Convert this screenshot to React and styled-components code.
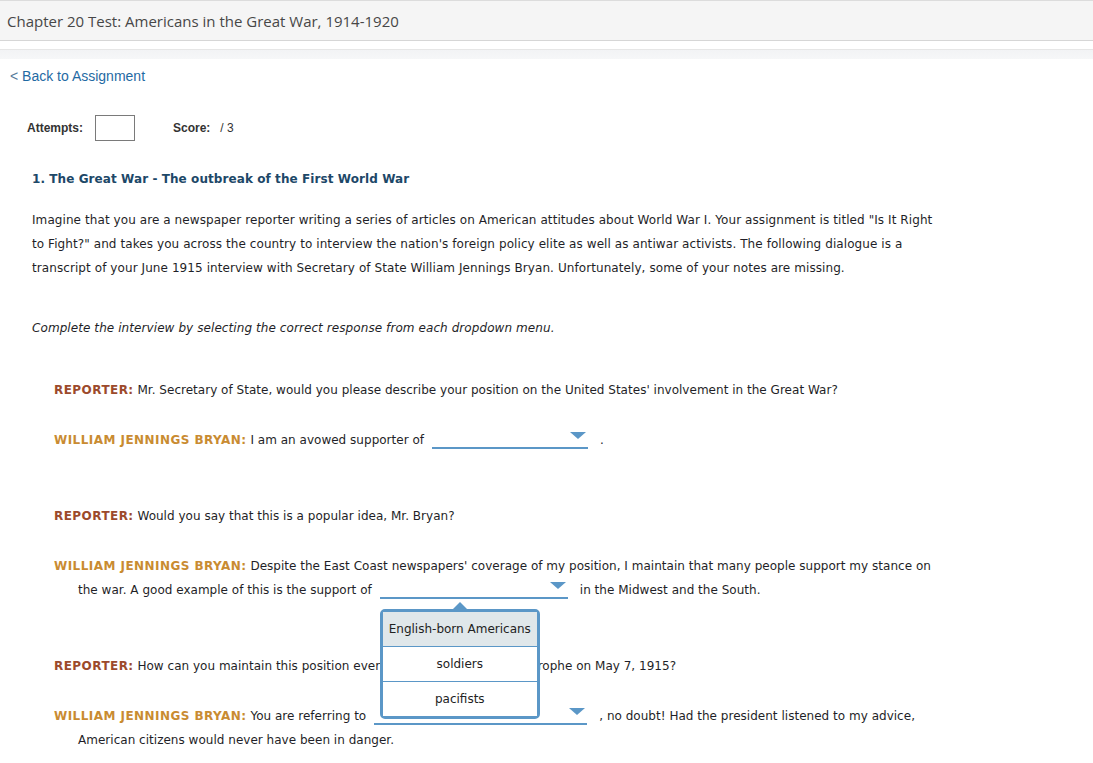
import React from 'react';
import styled, { createGlobalStyle } from 'styled-components';

const GlobalStyle = createGlobalStyle`
  body {
    margin: 0;
    background: #fff;
    font-family: "DejaVu Sans", Verdana, sans-serif;
    color: #1f1f28;
  }
`;

const TopBar = styled.div`
  height: 39px;
  border-top: 1px solid #dcdcdc;
  border-bottom: 1px solid #d6d6d6;
  background: #f5f5f5;
  display: flex;
  align-items: center;
  padding-left: 7px;
`;

const PageTitle = styled.h1`
  margin: 0;
  font-family: "Open Sans", sans-serif;
  font-weight: 400;
  font-size: 15px;
  color: #474747;
`;

const SubBand = styled.div`
  margin-top: 8px;
  height: 9px;
  border-top: 1px solid #e6e6e6;
  background: linear-gradient(#f2f3f5, #f6f7f8);
`;

const BackLink = styled.a`
  display: inline-block;
  margin: 9px 0 0 10px;
  font-family: "Liberation Sans", Arial, sans-serif;
  font-size: 14px;
  color: #1f6aa3;
  text-decoration: none;
  span {
    color: #557a9a;
  }
`;

const StatsRow = styled.div`
  display: flex;
  align-items: center;
  margin: 30px 0 0 27px;
  font-family: "Liberation Sans", Arial, sans-serif;
  font-size: 12px;
  color: #333;
`;

const StatLabel = styled.span`
  font-weight: bold;
  margin-right: ${p => p.gap || 8}px;
`;

const AttemptBox = styled.div`
  width: 38px;
  height: 24px;
  border: 1px solid #7a7a7a;
  margin-right: 38px;
`;

const Question = styled.div`
  margin: 26px 0 0 32px;
  font-size: 12px;
  line-height: 24px;
  letter-spacing: 0.08px;
`;

const QuestionTitle = styled.h2`
  margin: 0 0 17px;
  font-size: 12px;
  font-weight: bold;
  color: #1d4868;
`;

const Paragraph = styled.p`
  margin: 0;
`;

const Instruction = styled.p`
  margin: 36px 0 0;
  font-style: italic;
`;

const Dialogue = styled.div`
  margin: 38px 0 0 22px;
  letter-spacing: 0.02px;
`;

const Line = styled.p`
  margin: 0 0 ${p => p.after}px;
  padding-left: 24px;
  text-indent: -24px;
`;

const Speaker = styled.span`
  font-weight: bold;
  letter-spacing: 0.45px;
  color: ${p => (p.who === 'bryan' ? '#c98b31' : '#9c4a2c')};
`;

const Select = styled.span`
  position: relative;
  display: inline-block;
  width: ${p => p.w}px;
  height: 18px;
  margin: 0 ${p => p.right || 12}px 0 ${p => p.left || 8}px;
  border-bottom: 2px solid #5b97c7;
  vertical-align: -5px;
  text-indent: 0;
`;

const Caret = styled.span`
  position: absolute;
  right: 2px;
  top: 3px;
  width: 0;
  height: 0;
  border-left: 8px solid transparent;
  border-right: 8px solid transparent;
  border-top: 7px solid #5b97c7;
`;

const Menu = styled.div`
  position: absolute;
  z-index: 5;
  top: 30px;
  left: 0;
  width: 154px;
  border: 3px solid #5b97c7;
  border-radius: 5px;
  background: #fff;
  line-height: normal;
  letter-spacing: 0;
  &::before {
    content: '';
    position: absolute;
    top: -10px;
    left: 70px;
    border-left: 7px solid transparent;
    border-right: 7px solid transparent;
    border-bottom: 7px solid #5b97c7;
  }
`;

const Option = styled.div`
  height: 34px;
  display: flex;
  align-items: center;
  justify-content: center;
  font-size: 12px;
  color: #222;
  background: ${p => (p.active ? '#e0e7ea' : '#fff')};
  & + & {
    border-top: 1px solid #5b97c7;
  }
`;

export default function App() {
  return (
    <>
      <GlobalStyle />
      <TopBar>
        <PageTitle>Chapter 20 Test: Americans in the Great War, 1914-1920</PageTitle>
      </TopBar>
      <SubBand />
      <BackLink href="#"><span>&lt;</span> Back to Assignment</BackLink>
      <StatsRow>
        <StatLabel gap={12}>Attempts:</StatLabel>
        <AttemptBox />
        <StatLabel gap={10}>Score:</StatLabel>
        <span>/ 3</span>
      </StatsRow>
      <Question>
        <QuestionTitle>1. The Great War - The outbreak of the First World War</QuestionTitle>
        <Paragraph>
          Imagine that you are a newspaper reporter writing a series of articles on American attitudes about World War I. Your assignment is titled "Is It Right<br />
          to Fight?" and takes you across the country to interview the nation's foreign policy elite as well as antiwar activists. The following dialogue is a<br />
          transcript of your June 1915 interview with Secretary of State William Jennings Bryan. Unfortunately, some of your notes are missing.
        </Paragraph>
        <Instruction>Complete the interview by selecting the correct response from each dropdown menu.</Instruction>
        <Dialogue>
          <Line after={26}>
            <Speaker>REPORTER:</Speaker> Mr. Secretary of State, would you please describe your position on the United States' involvement in the Great War?
          </Line>
          <Line after={52}>
            <Speaker who="bryan">WILLIAM JENNINGS BRYAN:</Speaker> I am an avowed supporter of
            <Select w={156}><Caret /></Select>.
          </Line>
          <Line after={26}>
            <Speaker>REPORTER:</Speaker> Would you say that this is a popular idea, Mr. Bryan?
          </Line>
          <Line after={52}>
            <Speaker who="bryan">WILLIAM JENNINGS BRYAN:</Speaker> Despite the East Coast newspapers' coverage of my position, I maintain that many people support my stance on<br />
            the war. A good example of this is the support of
            <Select w={188}>
              <Caret />
              <Menu>
                <Option active>English-born Americans</Option>
                <Option>soldiers</Option>
                <Option>pacifists</Option>
              </Menu>
            </Select>
            in the Midwest and the South.
          </Line>
          <Line after={26}>
            <Speaker>REPORTER:</Speaker> How can you maintain this position even after the Lusitania catastrophe on May 7, 1915?
          </Line>
          <Line after={0}>
            <Speaker who="bryan">WILLIAM JENNINGS BRYAN:</Speaker> You are referring to
            <Select w={213}><Caret /></Select>, no doubt! Had the president listened to my advice,<br />
            American citizens would never have been in danger.
          </Line>
        </Dialogue>
      </Question>
    </>
  );
}
